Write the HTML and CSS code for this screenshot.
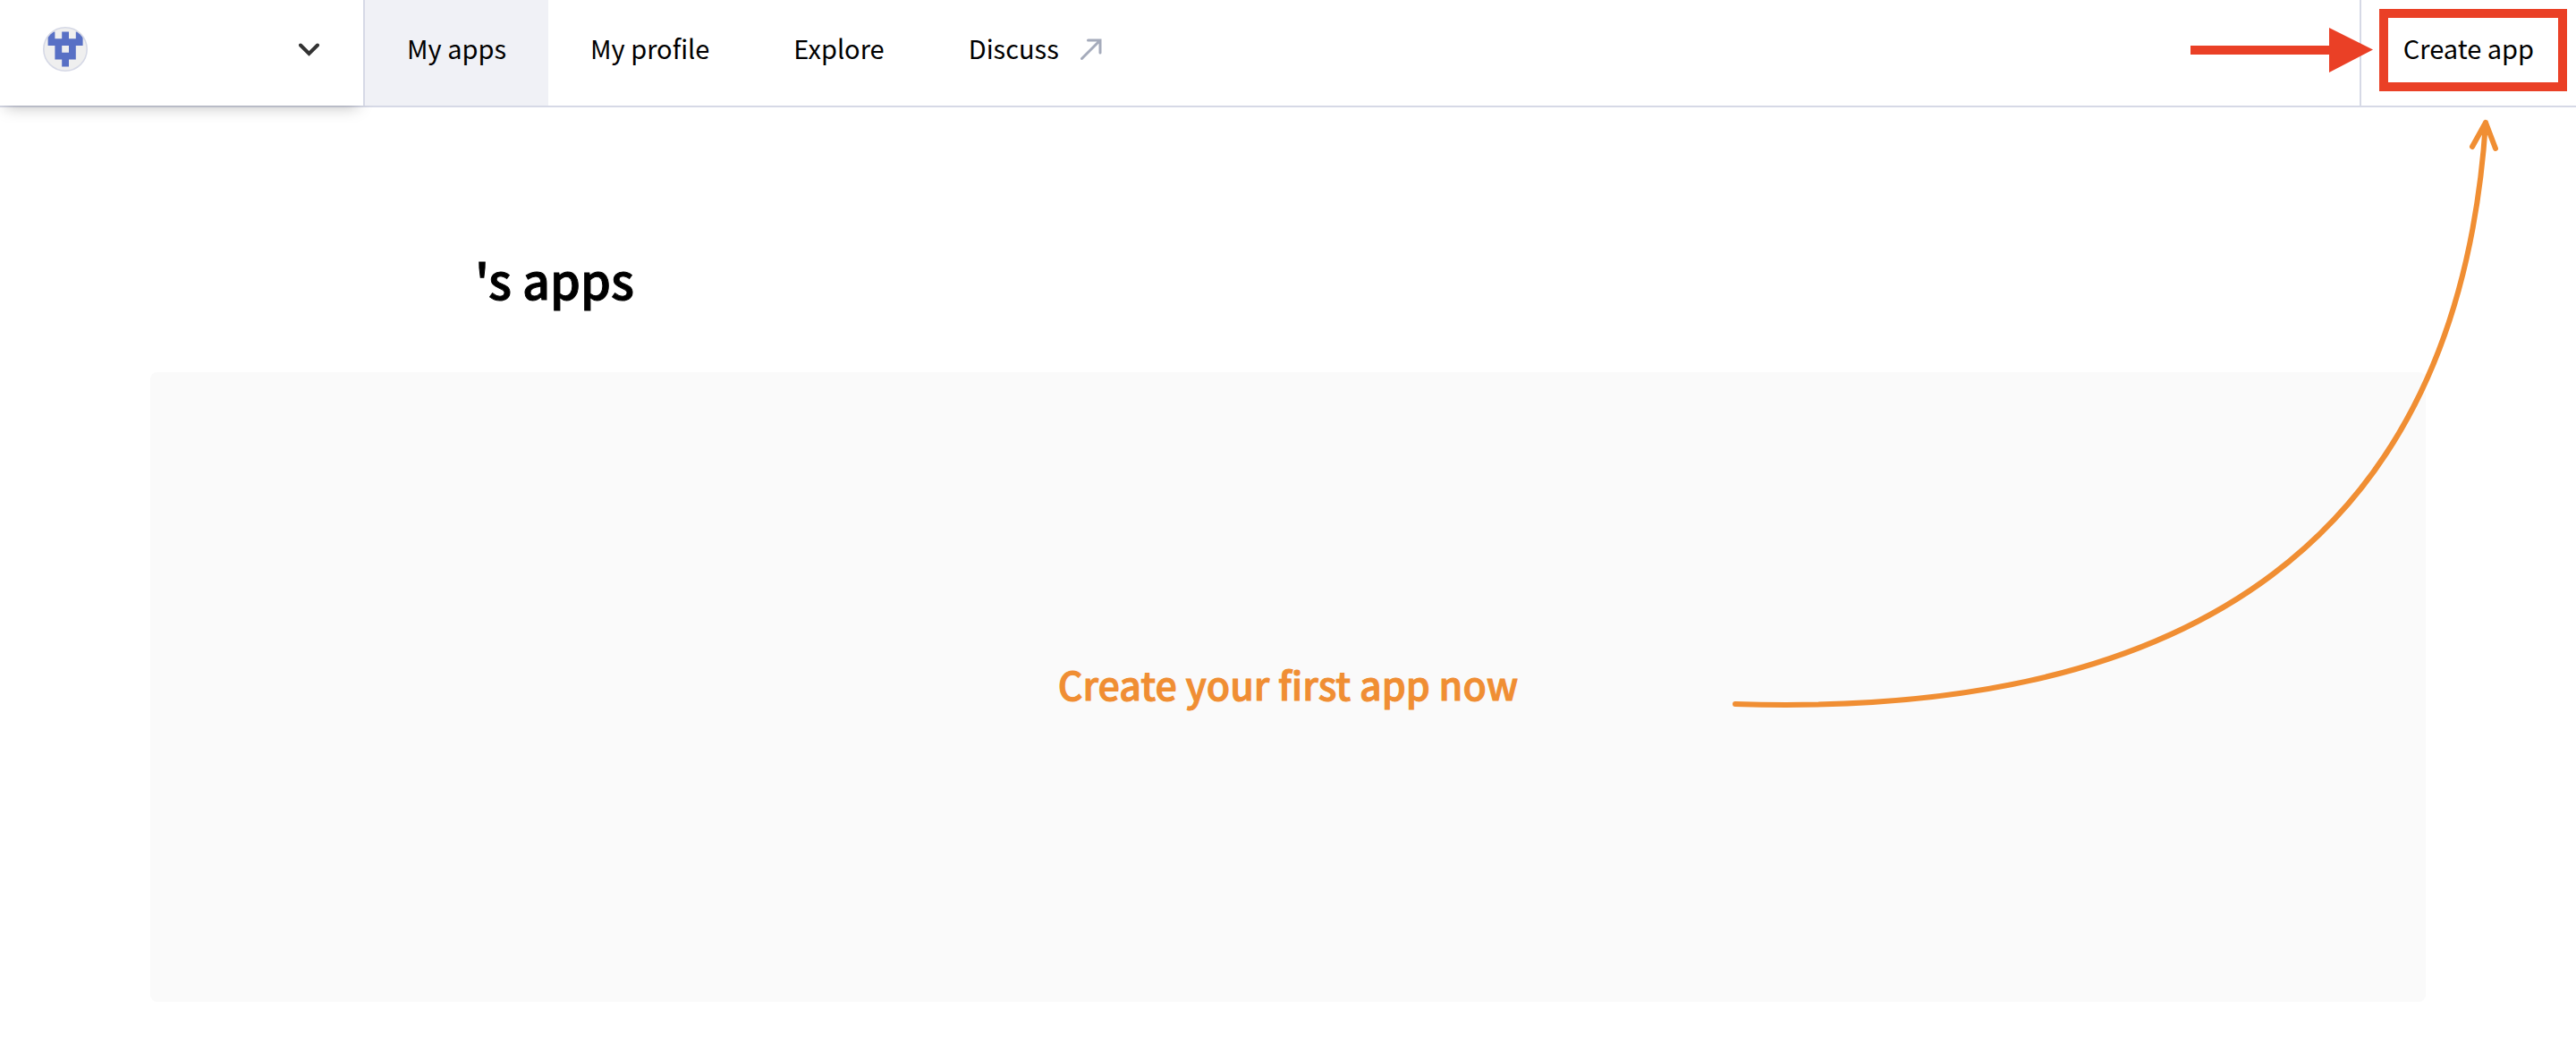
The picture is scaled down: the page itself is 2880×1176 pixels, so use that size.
FILE: index.html
```html
<!DOCTYPE html>
<html lang="en">
<head>
<meta charset="utf-8">
<title>My apps</title>
<link rel="stylesheet" href="styles.css">
</head>
<body>
<header class="topbar">
  <button class="account" type="button" aria-label="Switch account">
    <svg class="avatar" viewBox="0 0 50 50" aria-hidden="true">
      <defs><clipPath id="avatar-clip"><circle cx="25" cy="25" r="23.5"/></clipPath></defs>
      <circle cx="25" cy="25" r="24.2" fill="#efefef" stroke="#d6d9e6" stroke-width="1.6"/>
      <path clip-path="url(#avatar-clip)" fill="#5870c5" fill-rule="evenodd" d="M5.6 5.4h7.8v7.8h7.8V5.4h7.8v7.8h7.8V5.4h7.8V21h-7.8v15.6H29v7.8h-7.8v-7.8h-7.8V21H5.600zM21.200 21v7.800H29V21z"/>
    </svg>
    <svg class="chevron" viewBox="0 0 24 24" aria-hidden="true"><path d="M2 7.500 11.500 17 21 7.500" fill="none" stroke="#333" stroke-width="4" stroke-linecap="round"/></svg>
  </button>
  <nav class="tabs">
    <a class="tab tab-active" href="#apps" aria-current="page">My apps</a>
    <a class="tab" href="#profile">My profile</a>
    <a class="tab" href="#explore">Explore</a>
    <a class="tab" href="#discuss">Discuss
      <svg class="external" viewBox="0 0 24 24" aria-hidden="true"><path d="M1.500 22.500 22 2M8.500 2H22v14" fill="none" stroke="#a5abbb" stroke-width="3" stroke-linecap="round"/></svg>
    </a>
  </nav>
  <a class="create" href="#create">Create app</a>
</header>
<main class="content">
  <h1 class="title">'s apps</h1>
  <section class="empty">
    <p class="empty-text">Create your first app now</p>
  </section>
</main>
<div class="highlight"></div>
<svg class="pointer" viewBox="0 0 204 50" aria-hidden="true"><path fill="#ea4026" d="M0 20h155V0l49 24.500L155 50V30H0z"/></svg>
<svg class="curve" viewBox="0 0 880 680" aria-hidden="true">
  <path d="M20 667C520 683 828 492 859 17M844 44 859 17 870 46" fill="none"/>
</svg>
</body>
</html>
```
FILE: styles.css
```css
* { box-sizing: border-box; }
body {
  position: relative;
  margin: 0;
  background: #fff;
  color: #000;
  font-family: "Noto Sans CJK SC", "Noto Sans", sans-serif;
  font-size: 29px;
  line-height: 40px;
}
.topbar {
  display: flex;
  height: 120px;
  border-bottom: 2px solid #d6d9e6;
}
.account {
  display: flex;
  align-items: center;
  justify-content: space-between;
  width: 406px;
  padding: 0 48px 8px;
  border: 0;
  background: #fff;
  box-shadow: 0 8px 16px -6px rgba(0, 0, 0, 0.25);
}
.avatar { width: 50px; height: 50px; }
.chevron { width: 24px; height: 24px; }
.tabs {
  display: flex;
  flex: 1;
  border-left: 2px solid #d6d9e6;
}
.tab, .create {
  display: flex;
  align-items: center;
  padding: 0 47px 12px;
  color: #000;
  text-decoration: none;
  white-space: nowrap;
}
.tab-active { background: #f0f1f6; }
.external { width: 24px; height: 24px; margin: 4px 0 0 24px; }
.create { border-left: 2px solid #d6d9e6; }
.content { padding: 156px 168px 56px; }
.title {
  margin: 0 0 68px;
  padding-left: 363px;
  font-size: 54px;
  font-weight: 500;
  line-height: 72px;
  -webkit-text-stroke: 1px #000;
}
.empty {
  display: flex;
  align-items: center;
  justify-content: center;
  min-height: 704px;
  padding-bottom: 8px;
  border-radius: 8px;
  background: #fafafa;
}
.empty-text {
  margin: 0;
  color: #f08e33;
  font-size: 43px;
  font-weight: 500;
  line-height: 64px;
  -webkit-text-stroke: 1px #f08e33;
}
/* Callouts that lie over the page */
.highlight {
  position: absolute;
  top: 10px;
  right: 10px;
  width: 210px;
  height: 92px;
  border: 10px solid #ea4026;
  pointer-events: none;
}
.pointer {
  position: absolute;
  top: 31px;
  right: 227px;
  width: 204px;
  height: 50px;
  pointer-events: none;
}
.curve {
  position: absolute;
  top: 120px;
  right: 80px;
  width: 880px;
  height: 680px;
  pointer-events: none;
  stroke: #f08e33;
  stroke-width: 6px;
  stroke-linecap: round;
  stroke-linejoin: round;
}
```
